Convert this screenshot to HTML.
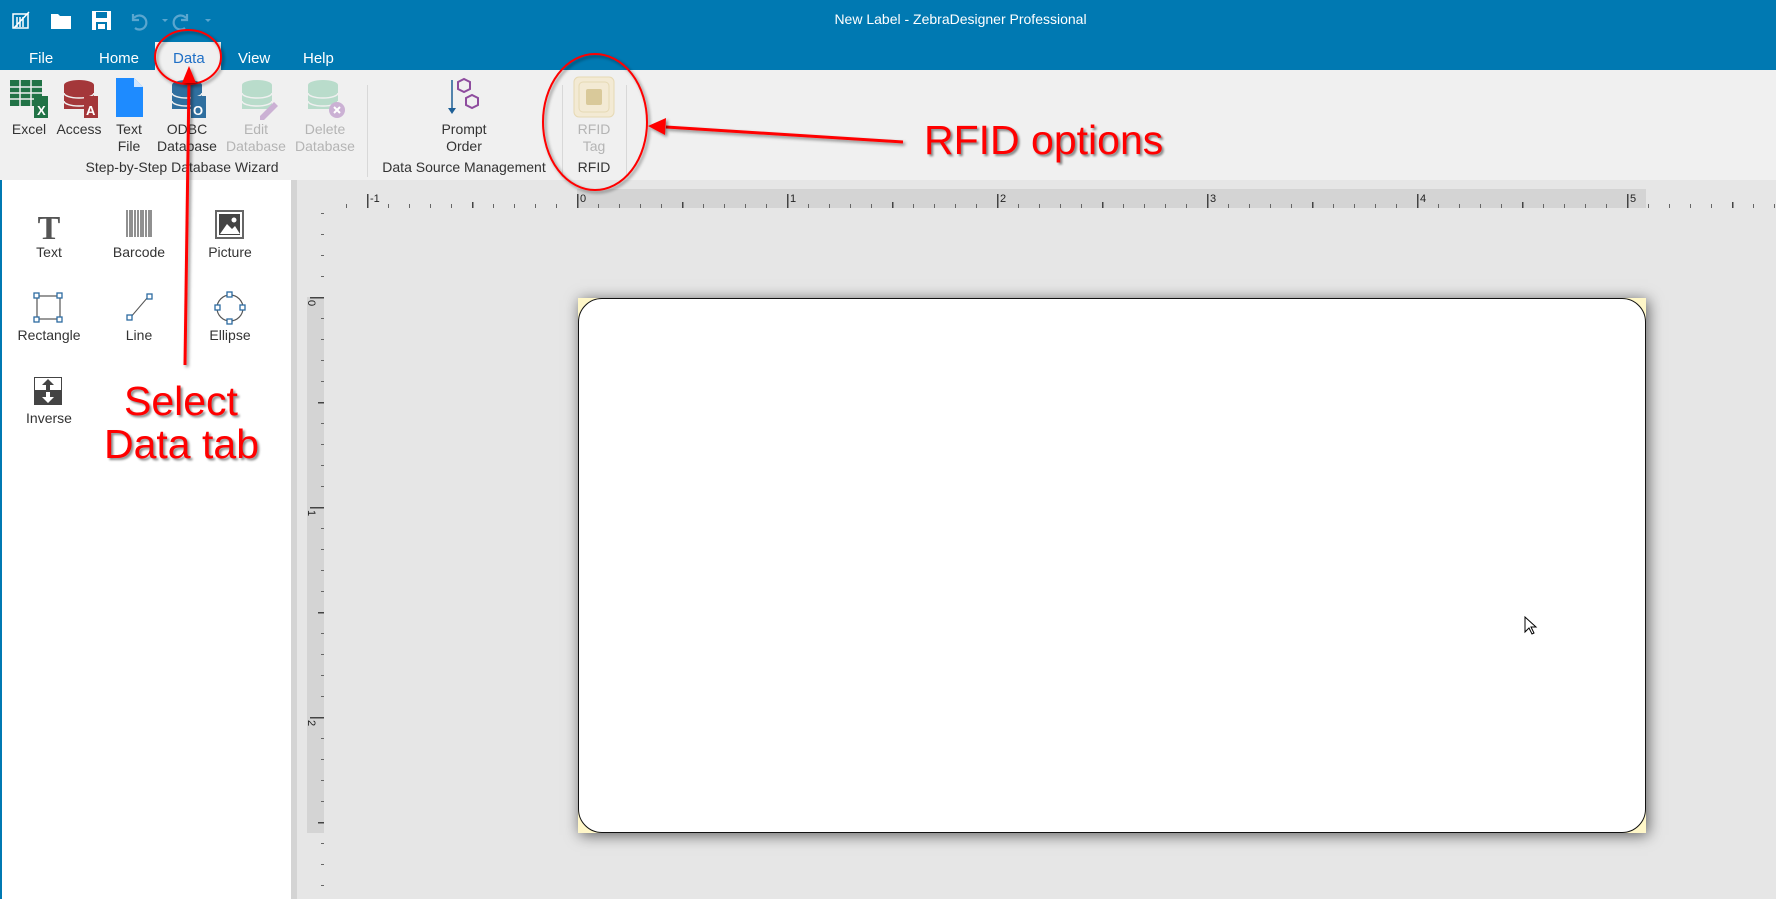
<!DOCTYPE html>
<html><head><meta charset="utf-8"><style>
*{margin:0;padding:0;box-sizing:border-box}
body{width:1776px;height:899px;overflow:hidden;position:relative;background:#e6e6e6;font-family:"Segoe UI","Liberation Sans",sans-serif;font-size:14px;color:#333}
.abs{position:absolute}
#title{left:0;top:0;width:1776px;height:70px;background:#0079b2}
.tab{position:absolute;top:50px;color:#fff;font-size:15px}
#ribbon{left:0;top:70px;width:1776px;height:110px;background:#f0f0f0}
.rl{position:absolute;text-align:center;font-size:14px;line-height:17px;color:#333;white-space:nowrap;transform:translateX(-50%)}
.dis{color:#b4b4b4}
.sep{position:absolute;top:85px;width:1px;height:92px;background:#d8d8d8}
#left{left:0;top:180px;width:291px;height:719px;background:#fff;border-left:2px solid #0079b2}
#split{left:291px;top:180px;width:6px;height:719px;background:#d4d4d4}
.tl{position:absolute;font-size:14px;color:#333;transform:translateX(-50%);white-space:nowrap}
.red{position:absolute;color:#ff0000;font-family:"Liberation Sans",Arial,sans-serif;font-size:41px;text-shadow:2px 2px 2px rgba(0,0,0,.45);white-space:nowrap}
</style></head><body>
<div id="title" class="abs"></div>
<div class="abs" style="left:0;top:0;width:2px;height:899px;background:#0079b2"></div>
<svg class="abs" style="left:0;top:0" width="240" height="40">
 <g fill="none" stroke="#fff" stroke-width="1.5"><rect x="13" y="14" width="15" height="14"/><path d="M14 28 L29 12 M17 27v-10 M20 27v-10 M23 27v-10"/></g>
 <path d="M51 14h7l2 2h11v13H51z" fill="#fff"/>
 <g><rect x="92" y="11" width="19" height="19" fill="#fff"/><rect x="96" y="12" width="11" height="6" fill="#0079b2"/><rect x="96" y="22" width="11" height="8" fill="#0079b2"/><rect x="98" y="24" width="7" height="5" fill="#fff"/></g>
 <g fill="none" stroke="#5aa6cf" stroke-width="2.2"><path d="M135 28a7 7 0 1 0-1-10"/><path d="M133 14v6h6" /><path d="M185 28a7 7 0 1 1 1-10"/><path d="M187 14v6h-6"/></g>
 <path d="M162 19l3 3 3-3z M205 19l3 3 3-3z" fill="#5aa6cf"/>
</svg>
<div class="abs" style="left:0;top:11px;width:1776px;text-align:center;color:#fff;font-size:14px;padding-left:145px">New Label - ZebraDesigner Professional</div>
<div class="abs" style="left:155px;top:42px;width:66px;height:28px;background:#f0f0f0"></div>
<div class="tab" style="left:29px">File</div>
<div class="tab" style="left:99px">Home</div>
<div class="tab" style="left:173px;color:#1f6fc6">Data</div>
<div class="tab" style="left:238px">View</div>
<div class="tab" style="left:303px">Help</div>
<div id="ribbon" class="abs"></div>
<svg class="abs" style="left:0;top:70px" width="640" height="60">
 <g transform="translate(10,10)"><rect x="0" y="0" width="32" height="26" fill="#217346"/><g stroke="#f0f0f0" stroke-width="1.5"><path d="M0 7h32M0 13h32M0 19h32M10 0v26M21 0v26"/></g><rect x="24" y="16" width="14" height="22" fill="#217346"/><text x="27" y="35" fill="#fff" font-size="13" font-weight="bold" font-family="Liberation Sans">X</text></g>
 <g transform="translate(64,10)" fill="#a4373a"><ellipse cx="15" cy="5" rx="15" ry="5"/><rect x="0" y="5" width="30" height="24"/><path d="M0 13a15 5 0 0 0 30 0M0 21a15 5 0 0 0 30 0" stroke="#f0f0f0" stroke-width="1.5" fill="none"/><rect x="20" y="16" width="14" height="22"/><text x="22" y="35" fill="#fff" font-size="13" font-weight="bold" font-family="Liberation Sans">A</text></g>
 <path d="M116 8h18l9 9v30h-27z" fill="#1e8bff"/><path d="M134 8v9h9z" fill="#d0e6ff"/>
 <g transform="translate(172,10)" fill="#2f6f9f"><ellipse cx="15" cy="5" rx="15" ry="5"/><rect x="0" y="5" width="30" height="24"/><path d="M0 13a15 5 0 0 0 30 0M0 21a15 5 0 0 0 30 0" stroke="#f0f0f0" stroke-width="1.5" fill="none"/><rect x="19" y="16" width="15" height="22"/><text x="21" y="35" fill="#fff" font-size="13" font-weight="bold" font-family="Liberation Sans">O</text></g>
 <g transform="translate(242,10)"><g fill="#b9dccb"><ellipse cx="15" cy="5" rx="15" ry="5"/><rect x="0" y="5" width="30" height="24"/></g><path d="M0 13a15 5 0 0 0 30 0M0 21a15 5 0 0 0 30 0" stroke="#f0f0f0" stroke-width="1.5" fill="none"/><path d="M18 36l14-14 4 4-14 14h-4z" fill="#cbb1d4"/></g>
 <g transform="translate(308,10)"><g fill="#b9dccb"><ellipse cx="15" cy="5" rx="15" ry="5"/><rect x="0" y="5" width="30" height="24"/></g><path d="M0 13a15 5 0 0 0 30 0M0 21a15 5 0 0 0 30 0" stroke="#f0f0f0" stroke-width="1.5" fill="none"/><circle cx="29" cy="30" r="8" fill="#cbb1d4"/><path d="M26 27l6 6M32 27l-6 6" stroke="#fff" stroke-width="2"/></g>
 <path d="M452 10v30" stroke="#1d5f96" stroke-width="1.5"/><path d="M448 38l4 6 4-6z" fill="#1d5f96"/>
 <g fill="none" stroke="#8e4c9e" stroke-width="2"><path d="M458 12l6-3 6 3v7l-6 3-6-3z"/><path d="M466 28l6-3 6 3v7l-6 3-6-3z"/></g>
 <rect x="574" y="7" width="40" height="40" rx="5" fill="#f3ead4" stroke="#e6d9b4"/><rect x="579" y="12" width="30" height="30" rx="4" fill="none" stroke="#e6d9b4"/><rect x="586" y="19" width="16" height="16" rx="2" fill="#d9c99a"/>
</svg>
<div class="rl" style="left:29px;top:121px">Excel</div>
<div class="rl" style="left:79px;top:121px">Access</div>
<div class="rl" style="left:129px;top:121px">Text<br>File</div>
<div class="rl" style="left:187px;top:121px">ODBC<br>Database</div>
<div class="rl dis" style="left:256px;top:121px">Edit<br>Database</div>
<div class="rl dis" style="left:325px;top:121px">Delete<br>Database</div>
<div class="rl" style="left:182px;top:159px">Step-by-Step Database Wizard</div>
<div class="sep" style="left:367px"></div>
<div class="rl" style="left:464px;top:121px">Prompt<br>Order</div>
<div class="rl" style="left:464px;top:159px">Data Source Management</div>
<div class="sep" style="left:562px"></div>
<div class="rl dis" style="left:594px;top:121px">RFID<br>Tag</div>
<div class="rl" style="left:594px;top:159px">RFID</div>
<div class="sep" style="left:626px"></div>
<div id="left" class="abs"></div>
<div id="split" class="abs"></div>
<svg class="abs" style="left:0;top:180px" width="291" height="260">
 <text x="49" y="59" text-anchor="middle" font-family="Liberation Serif" font-size="34" font-weight="bold" fill="#555">T</text>
 <g stroke="#555"><path d="M127 30v27M130 30v27M132 30v27M135 30v27M138 30v27M141 30v27M143 30v27M146 30v27M149 30v27M151 30v27" stroke-width="1.3"/></g>
 <rect x="216" y="31" width="27" height="27" fill="#fff" stroke="#666" stroke-width="2"/><rect x="219" y="34" width="21" height="21" fill="#444"/><path d="M220 54l7-10 5 5 3-3 5 8z" fill="#fff"/><circle cx="234" cy="40" r="2.5" fill="#fff"/>
 <rect x="37" y="116" width="23" height="23" fill="none" stroke="#555" stroke-width="1.2"/>
 <g fill="#fff" stroke="#2d6ba1" stroke-width="1.3"><rect x="34" y="113" width="5" height="5"/><rect x="57" y="113" width="5" height="5"/><rect x="34" y="137" width="5" height="5"/><rect x="57" y="137" width="5" height="5"/></g>
 <path d="M130 138l18-21" stroke="#555"/><g fill="#fff" stroke="#2d6ba1" stroke-width="1.3"><rect x="127" y="135" width="5" height="5"/><rect x="147" y="114" width="5" height="5"/></g>
 <circle cx="230" cy="128" r="13" fill="none" stroke="#555" stroke-width="1.2"/>
 <g fill="#fff" stroke="#2d6ba1" stroke-width="1.3"><rect x="227" y="112" width="5" height="5"/><rect x="227" y="139" width="5" height="5"/><rect x="215" y="125" width="5" height="5"/><rect x="240" y="125" width="5" height="5"/></g>
 <rect x="34" y="197" width="28" height="28" fill="#444"/><rect x="35" y="198" width="26" height="12" fill="#fff"/><path d="M48 199l-6 6h4v6h4v-6h4z" fill="#444"/><path d="M48 223l-6-6h4v-5h4v5h4z" fill="#fff"/>
</svg>
<div class="tl" style="left:49px;top:244px">Text</div>
<div class="tl" style="left:139px;top:244px">Barcode</div>
<div class="tl" style="left:230px;top:244px">Picture</div>
<div class="tl" style="left:49px;top:327px">Rectangle</div>
<div class="tl" style="left:139px;top:327px">Line</div>
<div class="tl" style="left:230px;top:327px">Ellipse</div>
<div class="tl" style="left:49px;top:410px">Inverse</div>
<svg class="abs" style="left:297px;top:180px" width="1479" height="719">
 <defs>
  <pattern id="ht" patternUnits="userSpaceOnUse" x="7" y="0" width="21" height="40"><rect x="0" y="24" width="1" height="4" fill="#666"/></pattern>
  <pattern id="vt" patternUnits="userSpaceOnUse" x="0" y="12" width="40" height="21"><rect x="24" y="0" width="3" height="1" fill="#666"/></pattern>
 </defs>
 <rect x="280" y="9" width="1069" height="19" fill="#d4d4d4"/>
 <rect x="10" y="117" width="17" height="536" fill="#d4d4d4"/>
 <rect x="49" y="0" width="1430" height="40" fill="url(#ht)"/>
 <rect x="0" y="33" width="40" height="686" fill="url(#vt)"/>
 <rect x="0" y="0" width="40" height="33" fill="#e6e6e6"/>
 <rect x="0" y="0" width="49" height="30" fill="#e6e6e6"/>
 <g fill="#444">
  <rect x="70" y="14" width="1.5" height="14"/><rect x="280" y="14" width="1.5" height="14"/><rect x="490" y="14" width="1.5" height="14"/><rect x="700" y="14" width="1.5" height="14"/><rect x="910" y="14" width="1.5" height="14"/><rect x="1120" y="14" width="1.5" height="14"/><rect x="1330" y="14" width="1.5" height="14"/>
  <rect x="175" y="22" width="1.5" height="6"/><rect x="385" y="22" width="1.5" height="6"/><rect x="595" y="22" width="1.5" height="6"/><rect x="805" y="22" width="1.5" height="6"/><rect x="1015" y="22" width="1.5" height="6"/><rect x="1225" y="22" width="1.5" height="6"/><rect x="1435" y="22" width="1.5" height="6"/>
  <rect x="13" y="117" width="14" height="1.5"/><rect x="13" y="327" width="14" height="1.5"/><rect x="13" y="537" width="14" height="1.5"/>
  <rect x="21" y="222" width="6" height="1.5"/><rect x="21" y="432" width="6" height="1.5"/><rect x="21" y="642" width="6" height="1.5"/>
 </g>
 <g font-family="Liberation Sans" font-size="11" fill="#222">
  <text x="73" y="22">-1</text><text x="283" y="22">0</text><text x="493" y="22">1</text><text x="703" y="22">2</text><text x="913" y="22">3</text><text x="1123" y="22">4</text><text x="1333" y="22">5</text>
  <text transform="translate(11,120) rotate(90)">0</text><text transform="translate(11,330) rotate(90)">1</text><text transform="translate(11,540) rotate(90)">2</text>
 </g>
</svg>
<div class="abs" style="left:578px;top:298px;width:1068px;height:535px;background:#fff7c8;box-shadow:2px 2px 14px rgba(0,0,0,.6)"></div>
<div class="abs" style="left:578px;top:298px;width:1068px;height:535px;background:#fff;border:1.5px solid #111;border-radius:24px"></div>
<svg class="abs" style="left:1524px;top:616px" width="16" height="22"><path d="M1 1v15l4-4 3 6 2-1-3-6h5z" fill="#fff" stroke="#000"/></svg>
<svg class="abs" style="left:0;top:0" width="1776" height="899">
 <defs><filter id="sh"><feDropShadow dx="2" dy="2" stdDeviation="1.5" flood-opacity=".45"/></filter></defs>
 <g filter="url(#sh)" fill="none" stroke="#ff0000" stroke-width="2">
  <ellipse cx="188" cy="57" rx="33" ry="27"/>
  <ellipse cx="595" cy="122" rx="52" ry="68"/>
  <path d="M185 365L189 80" stroke-width="3"/>
  <path d="M903 142L666 127" stroke-width="3"/>
 </g>
 <g filter="url(#sh)" fill="#ff0000">
  <path d="M189 66l-7 17h14z"/>
  <path d="M648 126l18-8 -1 17z"/>
 </g>
</svg>
<div class="red" style="left:924px;top:117px">RFID options</div>
<div class="red" style="left:124px;top:378px">Select</div>
<div class="red" style="left:104px;top:421px">Data tab</div>
</body></html>
